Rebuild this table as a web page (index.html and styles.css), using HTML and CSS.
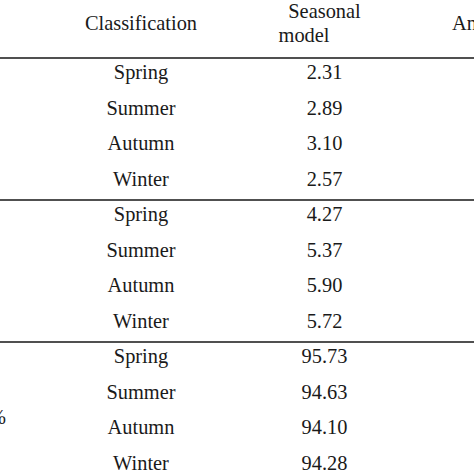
FILE: index.html
```html
<!DOCTYPE html>
<html lang="en">
<head>
<meta charset="utf-8">
<title>Seasonal model table</title>
<link rel="stylesheet" href="styles.css">
</head>
<body>
<div class="table">
  <div class="head">
    <div class="label"></div>
    <div class="cls">Classification</div>
    <div class="seas"><span class="l1">Seasonal</span><span class="l2">model</span></div>
    <div class="ann">Annual model</div>
  </div>
  <div class="section">
    <div class="label"></div>
    <div class="cls">Spring</div><div class="num">2.31</div>
    <div class="cls">Summer</div><div class="num">2.89</div>
    <div class="cls">Autumn</div><div class="num">3.10</div>
    <div class="cls">Winter</div><div class="num">2.57</div>
  </div>
  <div class="section">
    <div class="label"></div>
    <div class="cls">Spring</div><div class="num">4.27</div>
    <div class="cls">Summer</div><div class="num">5.37</div>
    <div class="cls">Autumn</div><div class="num">5.90</div>
    <div class="cls">Winter</div><div class="num">5.72</div>
  </div>
  <div class="section">
    <div class="label"><span>%</span></div>
    <div class="cls">Spring</div><div class="num">95.73</div>
    <div class="cls">Summer</div><div class="num">94.63</div>
    <div class="cls">Autumn</div><div class="num">94.10</div>
    <div class="cls">Winter</div><div class="num">94.28</div>
  </div>
</div>
</body>
</html>
```
FILE: styles.css
```css
html, body {
  margin: 0;
  padding: 0;
  overflow: hidden;
  background: #ffffff;
}
body {
  width: 474px;
  height: 474px;
  font-family: "Liberation Serif", "Times New Roman", serif;
  font-size: 20.4px;
  color: #1a1a1a;
}
.table {
  width: 474px;
}
.head {
  display: grid;
  grid-template-columns: 6px 270px 97px 101px;
  align-items: center;
  height: 57px;
  padding-bottom: 9.5px;
  box-sizing: border-box;
  line-height: 23.3px;
}
.head .cls {
  text-align: center;
}
.seas {
  display: flex;
  flex-direction: column;
  align-items: center;
}
.seas .l2 {
  padding-right: 41px;
}
.ann {
  padding-left: 79px;
  white-space: nowrap;
}
.section {
  display: grid;
  grid-template-columns: 6px 270px 97px 101px;
  grid-template-rows: repeat(4, 35.5px);
  border-top: 2px solid #505050;
  margin-top: -2px;
  line-height: 26.2px;
}
.head + .section {
  margin-top: 0;
}
.section .label {
  grid-row: 1 / span 4;
  grid-column: 1;
  display: flex;
  justify-content: flex-end;
  align-self: center;
  white-space: nowrap;
  padding-top: 6px;
}
.section .cls {
  grid-column: 2;
  text-align: center;
}
.section .num {
  grid-column: 3;
  text-align: center;
}
```
